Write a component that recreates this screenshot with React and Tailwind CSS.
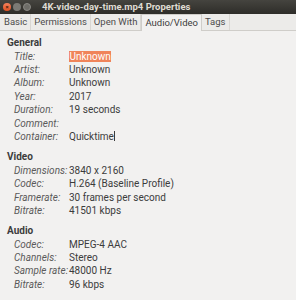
import React from 'react';

const sections = [
  {
    title: 'General',
    rows: [
      ['Title:', 'Unknown', 'selected'],
      ['Artist:', 'Unknown'],
      ['Album:', 'Unknown'],
      ['Year:', '2017'],
      ['Duration:', '19 seconds'],
      ['Comment:', ''],
      ['Container:', 'Quicktime', 'cursor'],
    ],
  },
  {
    title: 'Video',
    rows: [
      ['Dimensions:', '3840 x 2160'],
      ['Codec:', 'H.264 (Baseline Profile)'],
      ['Framerate:', '30 frames per second'],
      ['Bitrate:', '41501 kbps'],
    ],
  },
  {
    title: 'Audio',
    rows: [
      ['Codec:', 'MPEG-4 AAC'],
      ['Channels:', 'Stereo'],
      ['Sample rate:', '48000 Hz'],
      ['Bitrate:', '96 kbps'],
    ],
  },
];

const tabs = ['Basic', 'Permissions', 'Open With', 'Audio/Video', 'Tags'];

function TitleBar() {
  return (
    <div className="h-[14px] flex items-center bg-gradient-to-b from-[#45443f] to-[#2e2d29] pl-[3px]">
      <div className="flex items-center gap-[2px]">
        <span className="w-[8px] h-[8px] rounded-full bg-gradient-to-b from-[#f3805a] to-[#e0501f] flex items-center justify-center text-[6px] leading-none text-[#4a1c0b] font-bold">×</span>
        <span className="w-[8px] h-[8px] rounded-full bg-[#7b7a75]" />
        <span className="w-[8px] h-[8px] rounded-full bg-[#6e6d68] border border-[#8a8984]" />
      </div>
      <span className="ml-[11px] text-[9.5px] font-bold text-[#dfdbd2] leading-none">4K-video-day-time.mp4 Properties</span>
    </div>
  );
}

function Tabs() {
  return (
    <div className="h-[17px] flex items-end bg-[#ecebe9] border-b border-[#cfcdc9] pl-px text-[9.5px]">
      {tabs.map((t) => {
        const active = t === 'Audio/Video';
        return (
          <div
            key={t}
            className={
              active
                ? 'h-[17px] -mb-px px-[3px] flex items-center bg-[#f2f1f0] border-x border-t border-[#cfcdc9] text-[#3c3c3c]'
                : 'h-[16px] px-[3px] flex items-center border-r border-[#d9d7d3] text-[#4c4c4c]'
            }
          >
            {t}
          </div>
        );
      })}
    </div>
  );
}

function Row({ label, value, mode }) {
  return (
    <div className="flex h-[13.4px] items-center whitespace-nowrap">
      <span className="w-[62px] shrink-0 pl-[7px] italic text-[#5a5a5a]">{label}</span>
      {mode === 'selected' ? (
        <span className="bg-[#f0845a] text-white px-[0.5px] leading-[11px]">{value}</span>
      ) : (
        <span className="text-[#3c3c3c]">
          {value}
          {mode === 'cursor' && <span className="inline-block w-px h-[10px] bg-[#3c3c3c] align-middle -mt-[2px]" />}
        </span>
      )}
    </div>
  );
}

export default function App() {
  return (
    <div className="w-[296px] h-[300px] overflow-hidden bg-[#f2f1f0] text-[10px] text-[#3c3c3c]" style={{ fontFamily: '"Roboto", "Liberation Sans", sans-serif' }}>
      <TitleBar />
      <Tabs />
      <div className="pl-[7px] pt-[5px]">
        {sections.map((s) => (
          <div key={s.title} className="mb-[7px]">
            <div className="h-[13.4px] flex items-center font-bold text-[#3c3c3c]">{s.title}</div>
            {s.rows.map(([l, v, m]) => (
              <Row key={l} label={l} value={v} mode={m} />
            ))}
          </div>
        ))}
      </div>
    </div>
  );
}
